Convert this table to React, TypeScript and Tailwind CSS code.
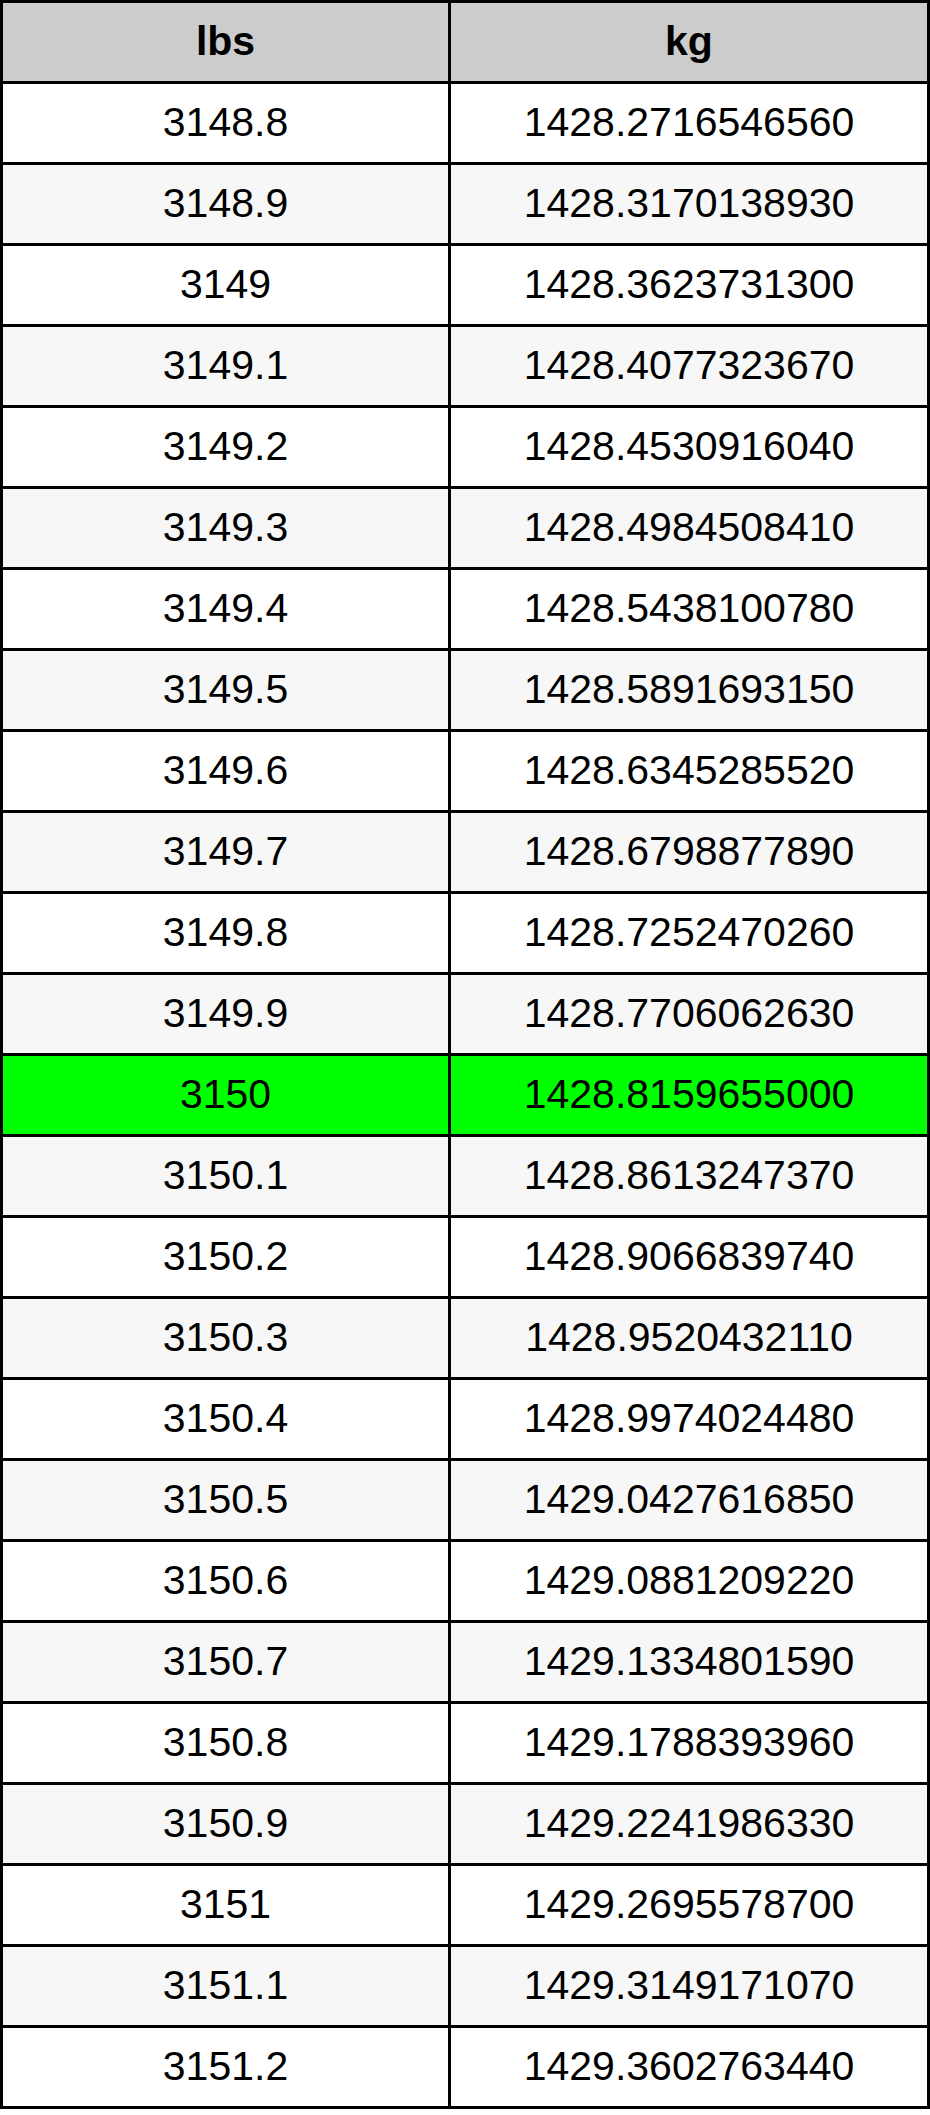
const rows: [string, string][] = [
  ['3148.8', '1428.2716546560'],
  ['3148.9', '1428.3170138930'],
  ['3149', '1428.3623731300'],
  ['3149.1', '1428.4077323670'],
  ['3149.2', '1428.4530916040'],
  ['3149.3', '1428.4984508410'],
  ['3149.4', '1428.5438100780'],
  ['3149.5', '1428.5891693150'],
  ['3149.6', '1428.6345285520'],
  ['3149.7', '1428.6798877890'],
  ['3149.8', '1428.7252470260'],
  ['3149.9', '1428.7706062630'],
  ['3150', '1428.8159655000'],
  ['3150.1', '1428.8613247370'],
  ['3150.2', '1428.9066839740'],
  ['3150.3', '1428.9520432110'],
  ['3150.4', '1428.9974024480'],
  ['3150.5', '1429.0427616850'],
  ['3150.6', '1429.0881209220'],
  ['3150.7', '1429.1334801590'],
  ['3150.8', '1429.1788393960'],
  ['3150.9', '1429.2241986330'],
  ['3151', '1429.2695578700'],
  ['3151.1', '1429.3149171070'],
  ['3151.2', '1429.3602763440'],
];

export default function App() {
  return (
    <div className="w-[930px] bg-white font-['Liberation_Sans',Arial,sans-serif] text-[41px] text-black">
      <div className="grid grid-cols-[448px_479px] border-l-[3px] border-t-[3px] border-black">
        {/* Header */}
        <div className="flex h-[81px] items-center justify-center border-b-[3px] border-r-[3px] border-black bg-[#cccccc] font-bold">
          lbs
        </div>
        <div className="flex h-[81px] items-center justify-center border-b-[3px] border-r-[3px] border-black bg-[#cccccc] font-bold">
          kg
        </div>

        {rows.map(([lbs, kg], i) => {
          const bg = lbs === '3150' ? 'bg-[#00ff00]' : i % 2 === 1 ? 'bg-[#f7f7f7]' : 'bg-white';
          return [
            <div
              key={lbs + '-l'}
              className={`flex h-[81px] items-center justify-center border-b-[3px] border-r-[3px] border-black ${bg}`}
            >
              {lbs}
            </div>,
            <div
              key={lbs + '-r'}
              className={`flex h-[81px] items-center justify-center border-b-[3px] border-r-[3px] border-black ${bg}`}
            >
              {kg}
            </div>,
          ];
        })}
      </div>
    </div>
  );
}
